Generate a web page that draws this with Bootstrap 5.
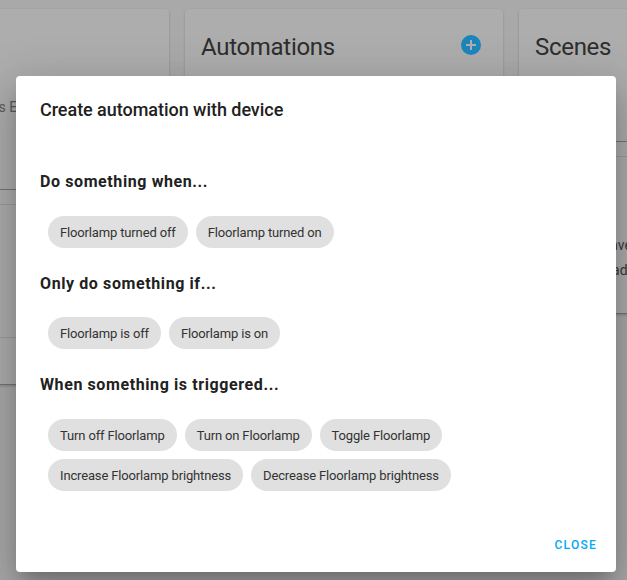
<!DOCTYPE html>
<html lang="en">
<head>
<meta charset="utf-8">
<title>Create automation with device</title>
<link rel="stylesheet" href="https://cdn.jsdelivr.net/npm/bootstrap@5.3.0/dist/css/bootstrap.min.css">
<style>
html,body{height:100%;overflow:hidden}
body{font-family:Roboto,sans-serif;background:#fafafa;color:#212121}
.stage{position:relative;width:627px;height:580px;overflow:hidden}
.backdrop-cols{display:flex;gap:16px;align-items:flex-start;height:100%;padding-top:9px;margin-left:-149px}
.bg-card{background:#fff;border-radius:4px;box-shadow:0 1px 3px rgba(0,0,0,.2);flex:0 0 318px}
.bg-card.first{height:376px}
.bg-card.middle{height:420px}
.bg-card.last{height:305px}
.bg-head{display:flex;align-items:center;justify-content:space-between;height:74px;padding:1px 22px 0 16px;font-size:24px;letter-spacing:-.3px;color:#444}
.bg-head svg{position:relative;z-index:1;margin-top:-3px}
.bg-text{font-size:14px;line-height:21px;white-space:nowrap}
.t-left{color:#888;padding-left:106px;margin-top:14px}
.t-have{color:#555;padding-left:28px}
.t-read{color:#555;padding-left:35px}
.rule-strong{height:1px;background:rgba(0,0,0,.32)}
.rule-soft{height:1px;background:rgba(0,0,0,.1)}
.gap-a{height:71px}.gap-b{height:14px}.gap-c{height:132px}.gap-d{height:46px}
.gap-e{height:58px}.gap-f{height:78px}.gap-g{height:4px}.gap-h{height:32px}
.scrim{position:absolute;inset:0;background:rgba(0,0,0,.32)}
.dlg{position:absolute;left:16px;top:76px;width:600px;height:496px;border:0;border-radius:4px;background:#fff;
 box-shadow:0 11px 15px -7px rgba(0,0,0,.2),0 24px 38px 3px rgba(0,0,0,.14),0 9px 46px 8px rgba(0,0,0,.12);
 padding:24px}
.dlg-title{font-size:18px;letter-spacing:-.04px;font-weight:500;line-height:20px;margin:0 0 52px;color:#212121}
.grp-title{font-size:16px;font-weight:700;line-height:20px;letter-spacing:.6px;margin:0 0 24px;color:#212121}
.grp-title.nudge{margin-bottom:23px}
.chips{display:flex;flex-wrap:wrap;gap:8px;padding-left:8px;margin-bottom:26px}
.chip-item{display:inline-flex;align-items:center;height:32px;padding:1px 12px 0;border:0;border-radius:16px;background:#e0e0e0;color:#333;font-size:13px;letter-spacing:-.15px;line-height:1}
.close-btn{position:absolute;right:11px;bottom:11px;padding:6px 8px;border:0;background:none;color:#03a9f4;font-size:12px;font-weight:500;letter-spacing:1.25px;line-height:20px}
</style>
</head>
<body>
<div class="stage">
  <div class="backdrop-cols">
    <div class="bg-card first">
      <div class="bg-head"></div>
      <div class="bg-text t-left">Devices Entities</div>
      <div class="gap-a"></div>
      <div class="rule-strong"></div>
      <div class="gap-b"></div>
      <div class="rule-soft"></div>
      <div class="gap-c"></div>
      <div class="rule-soft"></div>
      <div class="gap-d"></div>
      <div class="rule-strong"></div>
    </div>
    <div class="bg-card middle">
      <div class="bg-head"><span>Automations</span>
        <svg width="20" height="20" viewBox="0 0 20 20"><circle cx="10" cy="10" r="10" fill="#1b84b9"/><path d="M10 5v10M5 10h10" stroke="#adadad" stroke-width="2"/></svg>
      </div>
    </div>
    <div class="bg-card last">
      <div class="bg-head"><span>Scenes</span></div>
      <div class="gap-e"></div>
      <div class="rule-strong"></div>
      <div class="gap-b"></div>
      <div class="rule-soft"></div>
      <div class="gap-f"></div>
      <div class="bg-text t-have">help you have</div>
      <div class="gap-g"></div>
      <div class="bg-text t-read">go and read</div>
      <div class="gap-h"></div>
      <div class="rule-strong"></div>
    </div>
  </div>
  <div class="scrim"></div>
  <div class="card dlg">
    <h2 class="dlg-title">Create automation with device</h2>
    <h3 class="grp-title">Do something when...</h3>
    <div class="chips"><button class="chip-item">Floorlamp turned off</button><button class="chip-item">Floorlamp turned on</button></div>
    <h3 class="grp-title nudge">Only do something if...</h3>
    <div class="chips"><button class="chip-item">Floorlamp is off</button><button class="chip-item">Floorlamp is on</button></div>
    <h3 class="grp-title">When something is triggered...</h3>
    <div class="chips"><button class="chip-item">Turn off Floorlamp</button><button class="chip-item">Turn on Floorlamp</button><button class="chip-item">Toggle Floorlamp</button><button class="chip-item">Increase Floorlamp brightness</button><button class="chip-item">Decrease Floorlamp brightness</button></div>
    <button class="close-btn">CLOSE</button>
  </div>
</div>
<script src="https://cdn.jsdelivr.net/npm/bootstrap@5.3.0/dist/js/bootstrap.bundle.min.js"></script>
</body>
</html>
